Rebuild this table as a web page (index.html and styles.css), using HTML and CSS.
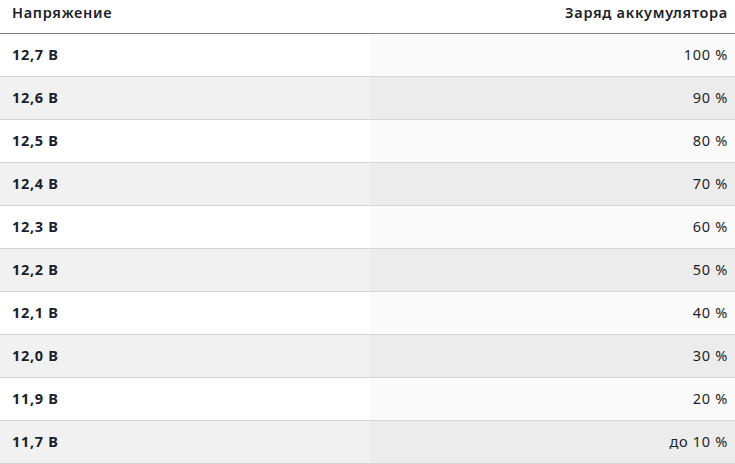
FILE: index.html
```html
<!DOCTYPE html>
<html lang="ru">
<head>
<meta charset="utf-8">
<link rel="stylesheet" href="styles.css">
</head>
<body>
<table class="tbl">
  <thead>
    <tr><th class="c1">Напряжение</th><th class="c2">Заряд аккумулятора</th></tr>
  </thead>
  <tbody>
    <tr><td class="c1">12,7 В</td><td class="c2">100 %</td></tr>
    <tr><td class="c1">12,6 В</td><td class="c2">90 %</td></tr>
    <tr><td class="c1">12,5 В</td><td class="c2">80 %</td></tr>
    <tr><td class="c1">12,4 В</td><td class="c2">70 %</td></tr>
    <tr><td class="c1">12,3 В</td><td class="c2">60 %</td></tr>
    <tr><td class="c1">12,2 В</td><td class="c2">50 %</td></tr>
    <tr><td class="c1">12,1 В</td><td class="c2">40 %</td></tr>
    <tr><td class="c1">12,0 В</td><td class="c2">30 %</td></tr>
    <tr><td class="c1">11,9 В</td><td class="c2">20 %</td></tr>
    <tr><td class="c1">11,7 В</td><td class="c2">до 10 %</td></tr>
  </tbody>
</table>
</body>
</html>
```
FILE: styles.css
```css
html, body { margin: 0; padding: 0; background: #fff; }
body { font-family: "Noto Sans", "Open Sans", sans-serif; font-size: 14.5px; letter-spacing: 0.7px; color: #1b1e2b; }
.tbl { width: 735px; border-collapse: collapse; table-layout: fixed; }
.tbl th { height: 33px; padding: 0 7px 8px 12px; font-weight: 600; border-bottom: 1px solid #808080; vertical-align: middle; box-sizing: border-box; }
.tbl th.c1 { text-align: left; width: 370px; }
.tbl th.c2 { text-align: right; }
.tbl td { height: 43px; padding: 0 7px 2px 12px; border-bottom: 1px solid #d6d6d6; vertical-align: middle; box-sizing: border-box; }
.tbl td.c1 { font-weight: 700; background: #fff; }
.tbl td.c2 { text-align: right; background: #fafafa; }
.tbl tbody tr:nth-child(even) td.c1 { background: #f1f1f1; }
.tbl tbody tr:nth-child(even) td.c2 { background: #ececec; }
```
